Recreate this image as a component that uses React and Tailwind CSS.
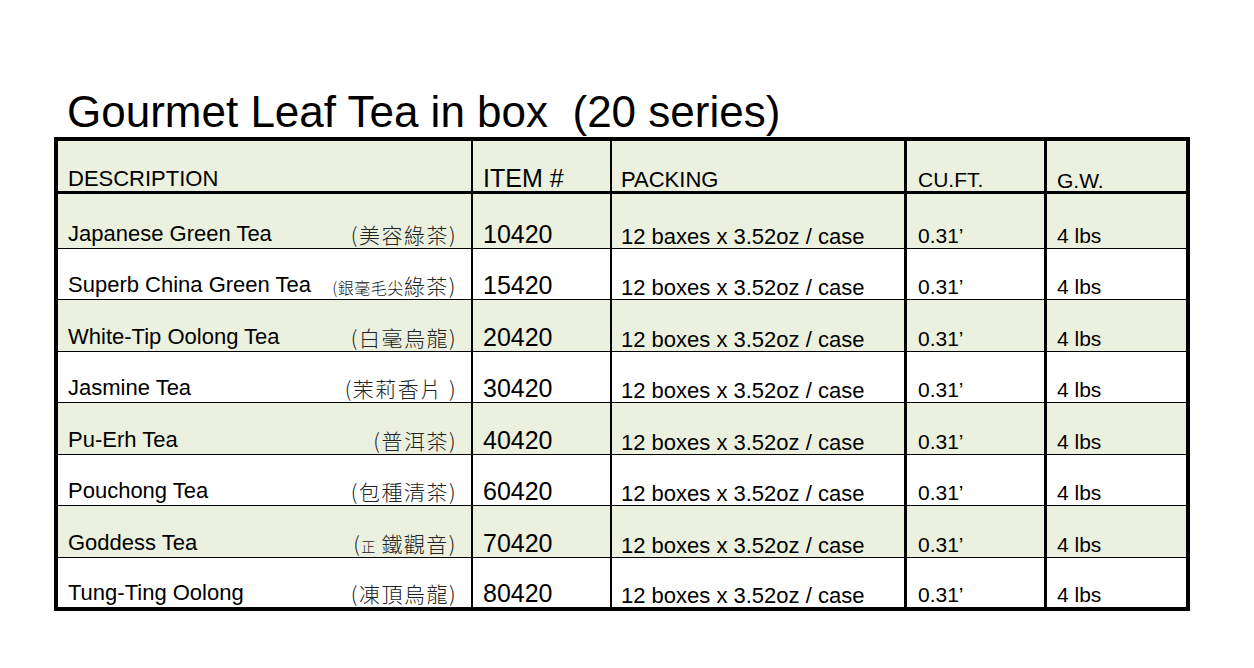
const rows = [
  { en: "Japanese Green Tea", zh: [["(美容綠茶)", ""]], item: "10420", pack: "12 baxes x 3.52oz / case", h: "h-[55px]", bg: "bg-[#ebf1de]" },
  { en: "Superb China Green Tea", zh: [["(銀毫毛尖", "text-[16px] tracking-[0.5px]"], ["綠茶)", ""]], item: "15420", pack: "12 boxes x 3.52oz / case", h: "h-[51px]", bg: "bg-white" },
  { en: "White-Tip Oolong Tea", zh: [["(白毫烏龍)", ""]], item: "20420", pack: "12 boxes x 3.52oz / case", h: "h-[52px]", bg: "bg-[#ebf1de]" },
  { en: "Jasmine Tea", zh: [["(茉莉香片 )", ""]], item: "30420", pack: "12 boxes x 3.52oz / case", h: "h-[51px]", bg: "bg-white" },
  { en: "Pu-Erh Tea", zh: [["(普洱茶)", ""]], item: "40420", pack: "12 boxes x 3.52oz / case", h: "h-[52px]", bg: "bg-[#ebf1de]" },
  { en: "Pouchong Tea", zh: [["(包種清茶)", ""]], item: "60420", pack: "12 boxes x 3.52oz / case", h: "h-[51px]", bg: "bg-white" },
  { en: "Goddess Tea", zh: [["(", ""], ["正 ", "text-[14px]"], ["鐵觀音)", ""]], item: "70420", pack: "12 boxes x 3.52oz / case", h: "h-[52px]", bg: "bg-[#ebf1de]" },
  { en: "Tung-Ting Oolong", zh: [["(凍頂烏龍)", ""]], item: "80420", pack: "12 boxes x 3.52oz / case", h: "h-[49px]", bg: "bg-white", last: true },
];

const sans = "font-['Liberation_Sans',Arial,sans-serif]";
const cjk = "font-['Noto_Sans_CJK_TC','Noto_Sans_CJK_SC',sans-serif]";

function Row({ r }) {
  return (
    <div className={`flex ${r.h} ${r.bg} ${r.last ? "" : "border-b border-black"}`}>
      <div className="w-[415px] flex items-end justify-between border-r-2 border-black pl-[10px] pr-[14px] pb-[3px]">
        <span className="text-[22px] leading-none">{r.en}</span>
        <span className={`${cjk} text-[21px] tracking-[1.5px] leading-none text-[#222] font-light`}>
          {r.zh.map(([t, c], i) => (
            <span key={i} className={c}>{t}</span>
          ))}
        </span>
      </div>
      <div className="w-[139px] flex items-end border-r-2 border-black pl-[10px] pb-[1px]">
        <span className="text-[25px] leading-none">{r.item}</span>
      </div>
      <div className="w-[295px] flex items-end border-r-[3px] border-black pl-[9px] pb-[0px]">
        <span className="text-[22px] leading-none">{r.pack}</span>
      </div>
      <div className="w-[140px] flex items-end border-r-[3px] border-black pl-[11px] pb-[2px]">
        <span className="text-[21px] leading-none">0.31’</span>
      </div>
      <div className="w-[139px] flex items-end pl-[10px] pb-[2px]">
        <span className="text-[21px] leading-none">4 lbs</span>
      </div>
    </div>
  );
}

export default function App() {
  return (
    <div className={`w-[1254px] h-[668px] bg-white text-black ${sans} pt-[90px] pl-[54px]`}>
      {/* title */}
      <h1 className="text-[44px] leading-[44px] pl-[13px] mb-[3px] whitespace-pre">Gourmet Leaf Tea in box  (20 series)</h1>

      <div className="w-[1136px] border-4 border-black">
        {/* header */}
        <div className="flex h-[53px] bg-[#ebf1de] border-b-[3px] border-black">
          <div className="w-[415px] flex items-end border-r-2 border-black pl-[10px] pb-[1px]">
            <span className="text-[22px] leading-none">DESCRIPTION</span>
          </div>
          <div className="w-[139px] flex items-end border-r-2 border-black pl-[10px]">
            <span className="text-[25px] leading-none">ITEM #</span>
          </div>
          <div className="w-[295px] flex items-end border-r-[3px] border-black pl-[9px]">
            <span className="text-[22px] leading-none">PACKING</span>
          </div>
          <div className="w-[140px] flex items-end border-r-[3px] border-black pl-[11px] pb-[1px]">
            <span className="text-[21px] leading-none">CU.FT.</span>
          </div>
          <div className="w-[139px] flex items-end pl-[10px]">
            <span className="text-[21px] leading-none">G.W.</span>
          </div>
        </div>

        {rows.map((r) => (
          <Row key={r.item} r={r} />
        ))}
      </div>
    </div>
  );
}
